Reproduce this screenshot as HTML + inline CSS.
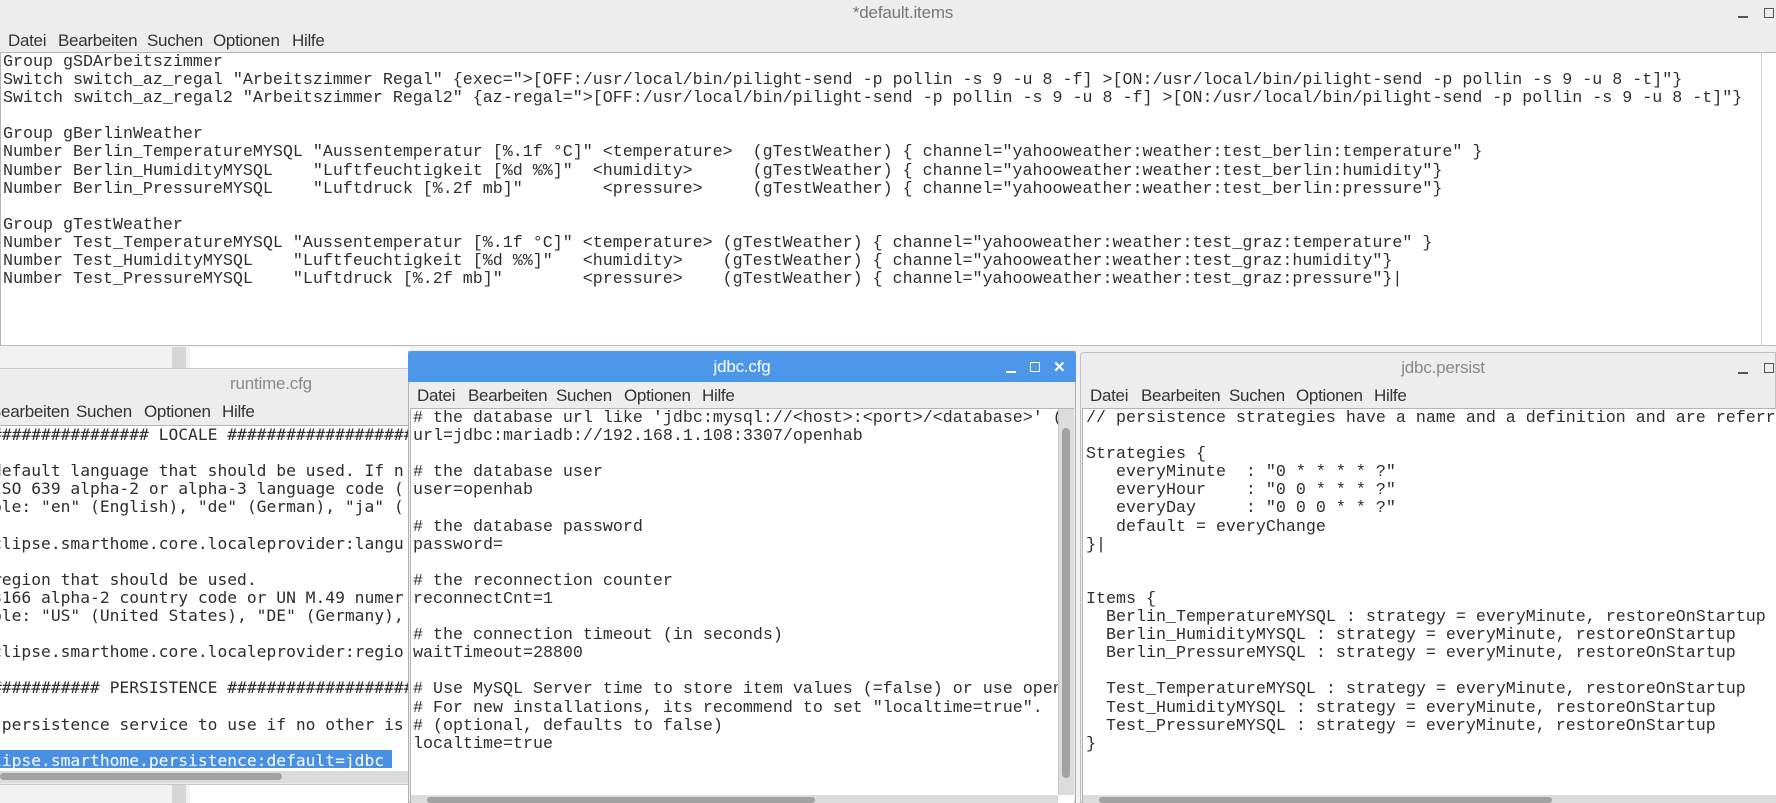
<!DOCTYPE html>
<html><head><meta charset="utf-8"><style>
*{margin:0;padding:0;box-sizing:border-box}
body{width:1776px;height:803px;overflow:hidden;background:#f2f2f2;position:relative;font-family:"Liberation Sans",sans-serif}
.a{position:absolute}
.mono{font-family:"Liberation Mono",monospace;font-size:16.67px;line-height:18.1px;color:#2e2e2e;white-space:pre}
.dv{font-family:"DejaVu Sans Mono","Liberation Mono",monospace;font-size:16.3px;line-height:18.1px;color:#2e2e2e;white-space:pre}
.menu span{position:absolute;font-size:17px;color:#333;top:0;letter-spacing:-0.3px}
.title{font-size:17px;color:#8a8a8a;letter-spacing:-0.2px}
</style></head><body>

<!-- main window -->
<div class="a" style="left:0;top:0;width:1776px;height:346px;background:#ededed;border-bottom:1px solid #bcbcbc"></div>
<div class="a title" style="left:0;top:3px;width:1806px;text-align:center;color:#777">*default.items</div>
<div class="a" style="left:1738px;top:16px;width:10px;height:2px;background:#555"></div>
<div class="a" style="left:1764px;top:8px;width:10px;height:10px;border:1.5px solid #555"></div>
<div class="a menu" style="left:0;top:31px;width:800px;height:20px">
<span style="left:8px">Datei</span><span style="left:58px">Bearbeiten</span><span style="left:147px">Suchen</span><span style="left:213px">Optionen</span><span style="left:292px">Hilfe</span></div>
<div class="a" style="left:0;top:52px;width:1776px;height:293px;background:#fff;border-top:1px solid #b5b5b5;border-left:1px solid #b5b5b5"></div>
<div class="a" style="left:1761px;top:52px;width:1px;height:293px;background:#d0d0d0"></div>
<div class="a mono" style="left:3px;top:54px">Group gSDArbeitszimmer
Switch switch_az_regal "Arbeitszimmer Regal" {exec=">[OFF:/usr/local/bin/pilight-send -p pollin -s 9 -u 8 -f] >[ON:/usr/local/bin/pilight-send -p pollin -s 9 -u 8 -t]"}
Switch switch_az_regal2 "Arbeitszimmer Regal2" {az-regal=">[OFF:/usr/local/bin/pilight-send -p pollin -s 9 -u 8 -f] >[ON:/usr/local/bin/pilight-send -p pollin -s 9 -u 8 -t]"}

Group gBerlinWeather
Number Berlin_TemperatureMYSQL "Aussentemperatur [%.1f °C]" &lt;temperature&gt;  (gTestWeather) { channel="yahooweather:weather:test_berlin:temperature" }
Number Berlin_HumidityMYSQL    "Luftfeuchtigkeit [%d %%]"  &lt;humidity&gt;      (gTestWeather) { channel="yahooweather:weather:test_berlin:humidity"}
Number Berlin_PressureMYSQL    "Luftdruck [%.2f mb]"        &lt;pressure&gt;     (gTestWeather) { channel="yahooweather:weather:test_berlin:pressure"}

Group gTestWeather
Number Test_TemperatureMYSQL "Aussentemperatur [%.1f °C]" &lt;temperature&gt; (gTestWeather) { channel="yahooweather:weather:test_graz:temperature" }
Number Test_HumidityMYSQL    "Luftfeuchtigkeit [%d %%]"   &lt;humidity&gt;    (gTestWeather) { channel="yahooweather:weather:test_graz:humidity"}
Number Test_PressureMYSQL    "Luftdruck [%.2f mb]"        &lt;pressure&gt;    (gTestWeather) { channel="yahooweather:weather:test_graz:pressure"}|</div>

<!-- gap region -->
<div class="a" style="left:190px;top:347px;width:220px;height:21px;background:#fff"></div>
<div class="a" style="left:172px;top:347px;width:14px;height:21px;background:#d6d6d6"></div>

<!-- runtime.cfg -->
<div class="a" style="left:0;top:368px;width:410px;height:435px;background:#ededed;border-top:1px solid #c8c8c8"></div>
<div class="a title" style="left:230px;top:374px">runtime.cfg</div>
<div class="a menu" style="left:0;top:402px;width:410px;height:20px">
<span style="left:-10px">Bearbeiten</span><span style="left:76px">Suchen</span><span style="left:144px">Optionen</span><span style="left:222px">Hilfe</span></div>
<div class="a" style="left:0;top:425px;width:410px;height:348px;background:#fff;border-top:1px solid #b5b5b5"></div>
<div class="a" style="left:0;top:750px;width:392px;height:18px;background:#4a90e2"></div>
<div class="a dv" style="left:-8px;top:426px">################ LOCALE ######################

default language that should be used. If n
ISO 639 alpha-2 or alpha-3 language code (
ple: "en" (English), "de" (German), "ja" (

clipse.smarthome.core.localeprovider:langu

region that should be used.
3166 alpha-2 country code or UN M.49 numer
ple: "US" (United States), "DE" (Germany),

clipse.smarthome.core.localeprovider:regio

########### PERSISTENCE ####################

 persistence service to use if no other is

<span style="color:#fff">lipse.smarthome.persistence:default=jdbc</span></div>
<div class="a" style="left:0;top:771px;width:410px;height:12px;background:#dcdcdc"></div>
<div class="a" style="left:0;top:773px;width:282px;height:7px;background:#a2a2a2;border-radius:4px"></div>
<div class="a" style="left:0;top:784px;width:410px;height:19px;background:#f2f2f2;border-top:1px solid #c8c8c8"></div>
<div class="a" style="left:172px;top:785px;width:14px;height:18px;background:#d6d6d6"></div>
<div class="a" style="left:190px;top:785px;width:220px;height:18px;background:#fff"></div>

<!-- jdbc.cfg -->
<div class="a" style="left:408px;top:351px;width:668px;height:452px;background:#ededed;border:1px solid #b0b0b0"></div>
<div class="a" style="left:408px;top:351px;width:668px;height:31px;background:#4d97ea;border-radius:4px 4px 0 0"></div>
<div class="a title" style="left:408px;top:357px;width:668px;text-align:center;color:#fff">jdbc.cfg</div>
<div class="a" style="left:1006px;top:371px;width:10px;height:2px;background:#fff"></div>
<div class="a" style="left:1030px;top:362px;width:10px;height:10px;border:1.5px solid #fff"></div>
<div class="a" style="left:1053px;top:358px;color:#fff;font-size:15px;font-weight:bold">✕</div>
<div class="a menu" style="left:0;top:386px;width:1080px;height:20px">
<span style="left:417px">Datei</span><span style="left:468px">Bearbeiten</span><span style="left:556px">Suchen</span><span style="left:624px">Optionen</span><span style="left:702px">Hilfe</span></div>
<div class="a" style="left:410px;top:408px;width:664px;height:395px;background:#fff;border-top:1px solid #b5b5b5;border-left:1px solid #b5b5b5"></div>
<div class="a mono" style="left:413px;top:410px;width:645px;overflow:hidden"># the database url like 'jdbc:mysql://&lt;host&gt;:&lt;port&gt;/&lt;database&gt;' (
url=jdbc:mariadb://192.168.1.108:3307/openhab

# the database user
user=openhab

# the database password
password=

# the reconnection counter
reconnectCnt=1

# the connection timeout (in seconds)
waitTimeout=28800

# Use MySQL Server time to store item values (=false) or use open
# For new installations, its recommend to set "localtime=true".
# (optional, defaults to false)
localtime=true</div>
<div class="a" style="left:1058px;top:409px;width:16px;height:386px;background:#dcdcdc;border-left:1px solid #c8c8c8"></div>
<div class="a" style="left:1062px;top:428px;width:8px;height:350px;background:#a2a2a2;border-radius:4px"></div>
<div class="a" style="left:411px;top:795px;width:647px;height:8px;background:#dcdcdc"></div>
<div class="a" style="left:427px;top:797px;width:388px;height:6px;background:#a2a2a2;border-radius:3px"></div>

<!-- jdbc.persist -->
<div class="a" style="left:1080px;top:352px;width:696px;height:451px;background:#ededed;border:1px solid #c0c0c0;border-radius:4px 0 0 0"></div>
<div class="a title" style="left:1080px;top:358px;width:726px;text-align:center;color:#888">jdbc.persist</div>
<div class="a" style="left:1738px;top:372px;width:10px;height:2px;background:#555"></div>
<div class="a" style="left:1764px;top:363px;width:10px;height:10px;border:1.5px solid #555"></div>
<div class="a menu" style="left:0;top:386px;width:1776px;height:20px">
<span style="left:1090px">Datei</span><span style="left:1141px">Bearbeiten</span><span style="left:1229px">Suchen</span><span style="left:1296px">Optionen</span><span style="left:1374px">Hilfe</span></div>
<div class="a" style="left:1082px;top:408px;width:694px;height:395px;background:#fff;border-top:1px solid #b5b5b5;border-left:1px solid #b5b5b5"></div>
<div class="a mono" style="left:1086px;top:410px;width:690px;overflow:hidden">// persistence strategies have a name and a definition and are referr

Strategies {
   everyMinute  : "0 * * * * ?"
   everyHour    : "0 0 * * * ?"
   everyDay     : "0 0 0 * * ?"
   default = everyChange
}|


Items {
  Berlin_TemperatureMYSQL : strategy = everyMinute, restoreOnStartup
  Berlin_HumidityMYSQL : strategy = everyMinute, restoreOnStartup
  Berlin_PressureMYSQL : strategy = everyMinute, restoreOnStartup

  Test_TemperatureMYSQL : strategy = everyMinute, restoreOnStartup
  Test_HumidityMYSQL : strategy = everyMinute, restoreOnStartup
  Test_PressureMYSQL : strategy = everyMinute, restoreOnStartup
}</div>
<div class="a" style="left:1083px;top:795px;width:693px;height:8px;background:#dcdcdc"></div>
<div class="a" style="left:1099px;top:797px;width:453px;height:6px;background:#a2a2a2;border-radius:3px"></div>
</body></html>
